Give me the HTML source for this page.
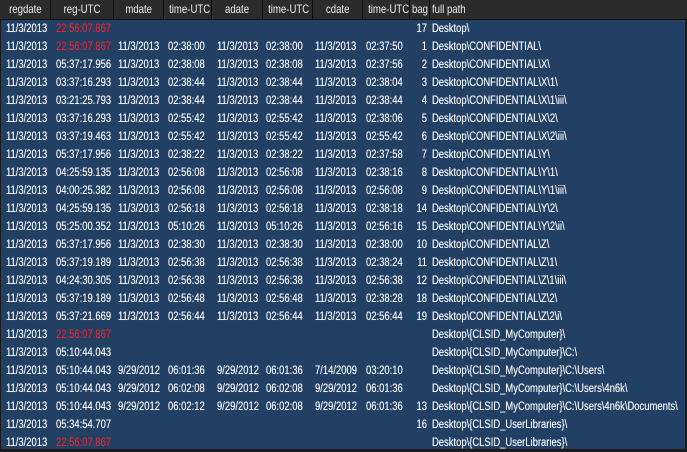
<!DOCTYPE html>
<html><head><meta charset="utf-8"><style>
html,body{margin:0;padding:0;}
body{width:687px;height:451px;overflow:hidden;background:#1b1b1b;position:relative;
font-family:"Liberation Sans",sans-serif;font-size:11.5px;color:#f2f6fc;}
#hdr{position:absolute;left:0;top:0;width:687px;height:19px;background:#2b2b2b;border-bottom:1px solid #111;}
#hdr div{position:absolute;top:0;height:19px;line-height:19px;border-right:1px solid #0e0e0e;box-sizing:border-box;white-space:nowrap;font-size:12px;}
#hdr div span{display:inline-block;transform:scaleX(.8);transform-origin:center;color:#eee;}
#body{position:absolute;left:1px;top:20px;width:684px;height:429px;background:#223f64;}
.r{position:absolute;left:0;height:18px;line-height:18px;width:684px;white-space:nowrap;}
.r span{position:absolute;top:0;transform:scaleX(.82);transform-origin:left center;text-shadow:0 0 0.4px #fff;}
.r span.b{transform-origin:right center;text-align:right;width:20px;}
.r span.red{color:#ff2424;text-shadow:none;}
</style></head><body>
<div id="hdr">
<div style="left:0;width:51px;text-align:center"><span>regdate</span></div>
<div style="left:51px;width:63px;text-align:center"><span>reg-UTC</span></div>
<div style="left:114px;width:50px;text-align:center"><span>mdate</span></div>
<div style="left:164px;width:48px;text-align:center"><span>time-UTC</span></div>
<div style="left:212px;width:51px;text-align:center"><span>adate</span></div>
<div style="left:263px;width:50px;text-align:center"><span>time-UTC</span></div>
<div style="left:313px;width:50px;text-align:center"><span>cdate</span></div>
<div style="left:363px;width:47px;text-align:center"><span>time-UTC</span></div>
<div style="left:410px;width:20px;text-align:center"><span>bag</span></div>
<div style="left:430px;width:257px;border-right:none"><span style="transform-origin:left center;margin-left:2px">full path</span></div>
</div>
<div id="body"></div>
<script>
var rows=[
["11/3/2013","!22:56:07.867","","","","","","","17","Desktop\\"],
["11/3/2013","!22:56:07.867","11/3/2013","02:38:00","11/3/2013","02:38:00","11/3/2013","02:37:50","1","Desktop\\CONFIDENTIAL\\"],
["11/3/2013","05:37:17.956","11/3/2013","02:38:08","11/3/2013","02:38:08","11/3/2013","02:37:56","2","Desktop\\CONFIDENTIAL\\X\\"],
["11/3/2013","03:37:16.293","11/3/2013","02:38:44","11/3/2013","02:38:44","11/3/2013","02:38:04","3","Desktop\\CONFIDENTIAL\\X\\1\\"],
["11/3/2013","03:21:25.793","11/3/2013","02:38:44","11/3/2013","02:38:44","11/3/2013","02:38:44","4","Desktop\\CONFIDENTIAL\\X\\1\\iii\\"],
["11/3/2013","03:37:16.293","11/3/2013","02:55:42","11/3/2013","02:55:42","11/3/2013","02:38:06","5","Desktop\\CONFIDENTIAL\\X\\2\\"],
["11/3/2013","03:37:19.463","11/3/2013","02:55:42","11/3/2013","02:55:42","11/3/2013","02:55:42","6","Desktop\\CONFIDENTIAL\\X\\2\\iii\\"],
["11/3/2013","05:37:17.956","11/3/2013","02:38:22","11/3/2013","02:38:22","11/3/2013","02:37:58","7","Desktop\\CONFIDENTIAL\\Y\\"],
["11/3/2013","04:25:59.135","11/3/2013","02:56:08","11/3/2013","02:56:08","11/3/2013","02:38:16","8","Desktop\\CONFIDENTIAL\\Y\\1\\"],
["11/3/2013","04:00:25.382","11/3/2013","02:56:08","11/3/2013","02:56:08","11/3/2013","02:56:08","9","Desktop\\CONFIDENTIAL\\Y\\1\\iii\\"],
["11/3/2013","04:25:59.135","11/3/2013","02:56:18","11/3/2013","02:56:18","11/3/2013","02:38:18","14","Desktop\\CONFIDENTIAL\\Y\\2\\"],
["11/3/2013","05:25:00.352","11/3/2013","05:10:26","11/3/2013","05:10:26","11/3/2013","02:56:16","15","Desktop\\CONFIDENTIAL\\Y\\2\\ii\\"],
["11/3/2013","05:37:17.956","11/3/2013","02:38:30","11/3/2013","02:38:30","11/3/2013","02:38:00","10","Desktop\\CONFIDENTIAL\\Z\\"],
["11/3/2013","05:37:19.189","11/3/2013","02:56:38","11/3/2013","02:56:38","11/3/2013","02:38:24","11","Desktop\\CONFIDENTIAL\\Z\\1\\"],
["11/3/2013","04:24:30.305","11/3/2013","02:56:38","11/3/2013","02:56:38","11/3/2013","02:56:38","12","Desktop\\CONFIDENTIAL\\Z\\1\\iii\\"],
["11/3/2013","05:37:19.189","11/3/2013","02:56:48","11/3/2013","02:56:48","11/3/2013","02:38:28","18","Desktop\\CONFIDENTIAL\\Z\\2\\"],
["11/3/2013","05:37:21.669","11/3/2013","02:56:44","11/3/2013","02:56:44","11/3/2013","02:56:44","19","Desktop\\CONFIDENTIAL\\Z\\2\\i\\"],
["11/3/2013","!22:56:07.867","","","","","","","","Desktop\\{CLSID_MyComputer}\\"],
["11/3/2013","05:10:44.043","","","","","","","","Desktop\\{CLSID_MyComputer}\\C:\\"],
["11/3/2013","05:10:44.043","9/29/2012","06:01:36","9/29/2012","06:01:36","7/14/2009","03:20:10","","Desktop\\{CLSID_MyComputer}\\C:\\Users\\"],
["11/3/2013","05:10:44.043","9/29/2012","06:02:08","9/29/2012","06:02:08","9/29/2012","06:01:36","","Desktop\\{CLSID_MyComputer}\\C:\\Users\\4n6k\\"],
["11/3/2013","05:10:44.043","9/29/2012","06:02:12","9/29/2012","06:02:08","9/29/2012","06:01:36","13","Desktop\\{CLSID_MyComputer}\\C:\\Users\\4n6k\\Documents\\"],
["11/3/2013","05:34:54.707","","","","","","","16","Desktop\\{CLSID_UserLibraries}\\"],
["11/3/2013","!22:56:07.867","","","","","","","","Desktop\\{CLSID_UserLibraries}\\"]
];
var xs=[5,55,117,167,216,265,314,365,406,431];
var b=document.getElementById('body'),h='';
rows.forEach(function(r,i){
 h+='<div class="r" style="top:'+(i*18)+'px">';
 r.forEach(function(c,j){
  if(!c)return;var cls='';
  if(c[0]=='!'){c=c.slice(1);cls='red';}
  if(j==8)cls='b';
  h+='<span class="'+cls+'" style="left:'+xs[j]+'px">'+c+'</span>';
 });
 h+='</div>';
});
b.innerHTML=h;
</script>
</body></html>
